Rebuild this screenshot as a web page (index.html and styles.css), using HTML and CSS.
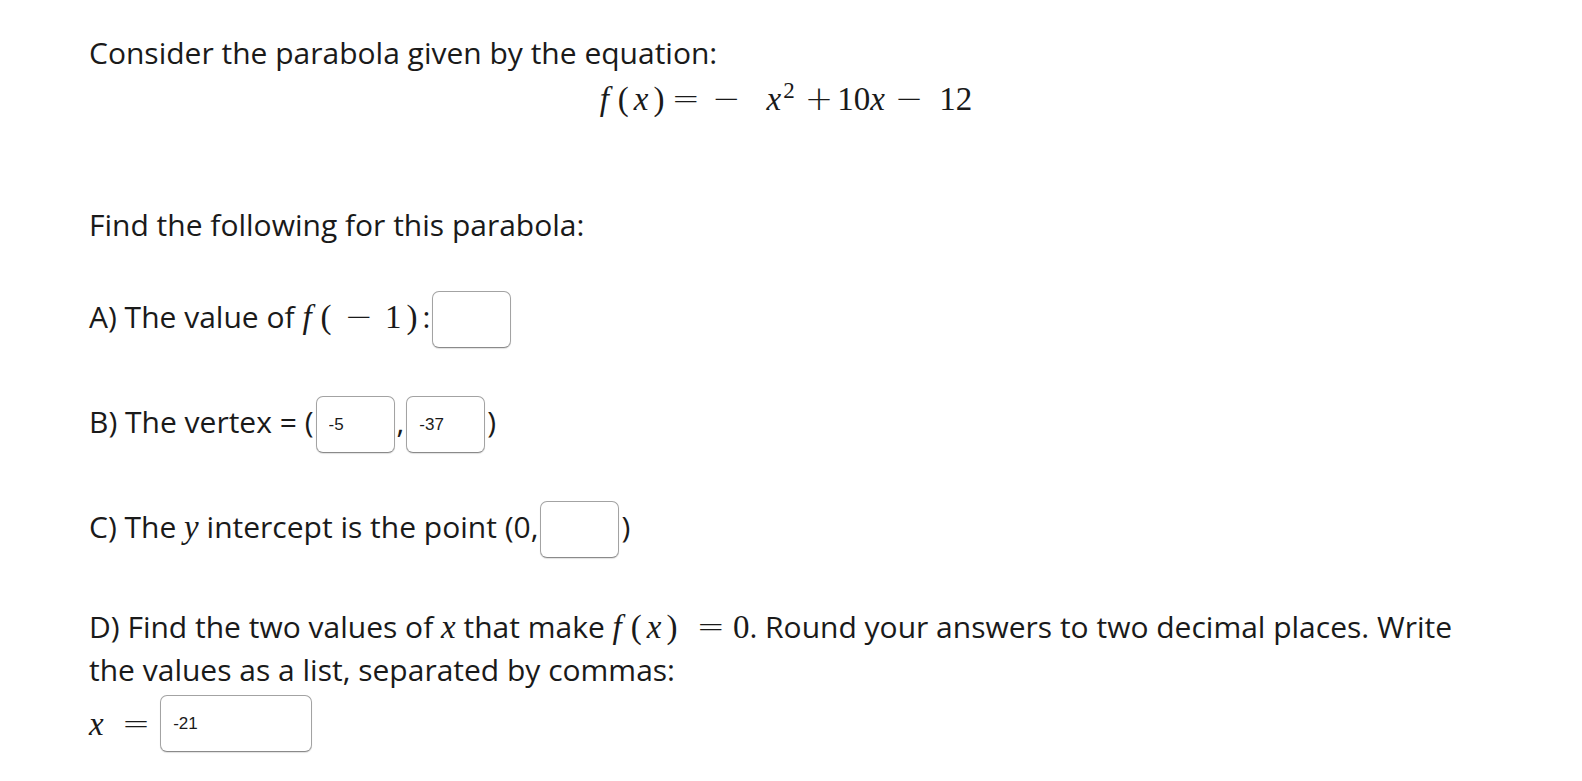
FILE: index.html
```html
<!DOCTYPE html>
<html lang="en">
  <head>
    <meta charset="UTF-8" />
    <title>Parabola</title>
    <link rel="stylesheet" href="styles.css">
  </head>
  <body>
    <div class="problem">
      <p class="intro">Consider the parabola given by the equation:</p>
      <div class="display">
        <span class="m"><i class="fn">f</i><span class="p">(</span><i>x</i><span class="p">)</span><span class="op eq-rel">=</span><span class="op eq-neg">&minus;</span><i>x</i><sup>2</sup><span class="op eq-plus">+</span>10<i>x</i><span class="op eq-minus">&minus;</span>12</span>
      </div>

      <p class="lead">Find the following for this parabola:</p>

      <p class="row row-a">A) The value of <span class="m"><i class="fn">f</i><span class="p">(</span><span class="op a-neg">&minus;</span>1<span class="p">)</span></span>:<input type="text" class="ans" /></p>

      <p class="row row-b">B) The vertex = (<input type="text" class="ans" value="-5" />,<input type="text" class="ans" value="-37" />)</p>

      <p class="row row-c">C) The <span class="m"><i>y</i></span> intercept is the point (0,<input type="text" class="ans" />)</p>

      <p class="part-d">D) Find the two values of <span class="m"><i>x</i></span> that make <span class="m"><i class="fn">f</i><span class="p">(</span><i>x</i><span class="p">)</span><span class="op d-rel">=</span>0</span>. Round your answers to two decimal places. Write the values as a list, separated by commas:</p>

      <div class="row-x">
        <span class="m"><i>x</i><span class="op x-rel">=</span></span>
        <input type="text" class="ans wide" value="-21" />
      </div>
    </div>
  </body>
</html>
```

FILE: styles.css
```css
body {
  margin: 0;
  background: #fff;
  color: #1a1a1a;
  font-family: "Open Sans", "Noto Sans", sans-serif;
  font-size: 30px;
  line-height: 44px;
}
.problem {
  padding: 31px 103px 20px 89px;
}
p {
  margin: 0;
}

/* inline math, set in a serif the way a TeX render looks */
.m {
  font-family: "Liberation Serif", "DejaVu Serif", serif;
  font-size: 33px;
  line-height: 1;
}
.m i {
  font-style: italic;
}
.m .fn {
  margin-right: 4px;
}
.m .p {
  margin: 0 5px;
}
.m sup {
  font-size: 23px;
  line-height: 0;
  margin: 0 4px 0 2px;
}
/* operators get the wide TeX glyphs, in a light weight */
.op {
  font-family: "DejaVu Sans", sans-serif;
  font-size: 34px;
  font-weight: 300;
  line-height: 1;
}

.display {
  margin-top: 2px;
  text-align: center;
  padding-left: 4px;
}
.eq-rel {
  margin: 0 12px 0 2px;
}
.eq-neg {
  margin-right: 26px;
}
.eq-plus {
  margin: 0 4px 0 6px;
}
.eq-minus {
  margin: 0 16px 0 10px;
}
.a-neg {
  margin: 0 12px 0 8px;
}
.d-rel {
  margin: 0 8px 0 14px;
}
.x-rel {
  margin: 0 8px 0 18px;
}

.lead {
  margin-top: 82px;
}
.row {
  height: 57px;
  line-height: 57px;
  white-space: nowrap;
}
.row-a {
  margin-top: 41px;
}
.row-b {
  margin-top: 48px;
}
.row-c {
  margin-top: 48px;
}
.part-d {
  margin-top: 50px;
  line-height: 43px;
}
.row-x {
  display: flex;
  align-items: center;
  margin-top: 4px;
}

.ans {
  box-sizing: border-box;
  vertical-align: middle;
  width: 79px;
  height: 57px;
  margin: 0 2px;
  padding: 0 12px;
  border: 1px solid #a3a3a3;
  border-bottom-color: #8a8a8a;
  border-radius: 7px;
  box-shadow: 0 1px 1px rgba(0, 0, 0, 0.12);
  font-family: "Liberation Sans", Arial, sans-serif;
  font-size: 17px;
  color: #1a1a1a;
  background: #fff;
}
.ans.wide {
  width: 152px;
}
```
